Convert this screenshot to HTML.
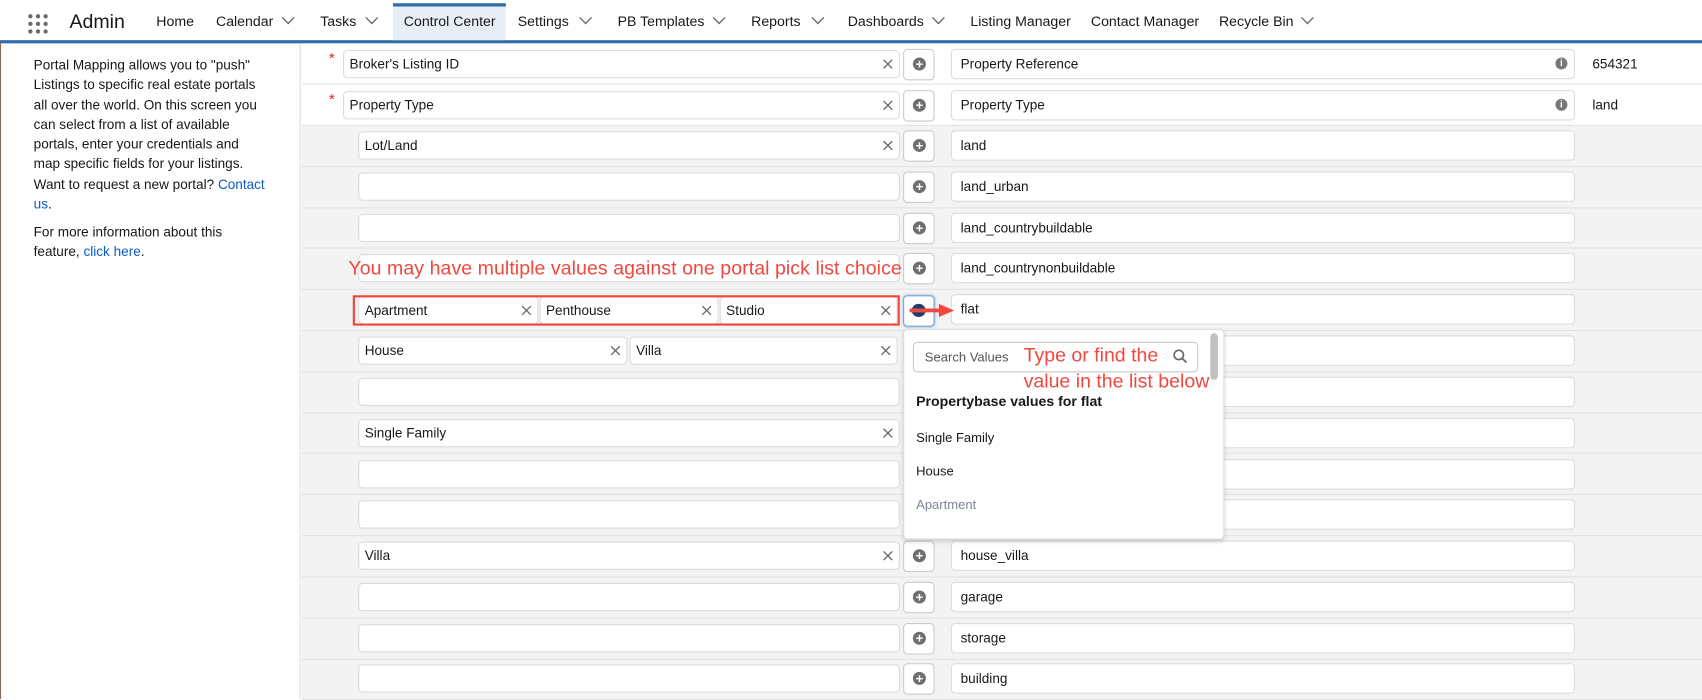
<!DOCTYPE html>
<html><head><meta charset="utf-8"><style>
html,body{margin:0;padding:0;width:1702px;height:699px;overflow:hidden;background:#fff}
#w{position:absolute;left:0;top:0;width:1568px;height:644px;transform:scale(1.08546);transform-origin:0 0;font-family:"Liberation Sans",sans-serif;color:#181818;font-size:12.5px}
.a{position:absolute}
.nav{left:0;top:0;width:1568px;height:37px;background:#fff;border-bottom:3px solid #2f6ca8}
.t{position:absolute;top:12px;font-size:13px;color:#181818}
.ch{position:absolute;top:13px;width:6px;height:6px;border-right:1.1px solid #666;border-bottom:1.1px solid #666;transform:rotate(45deg) scale(1.2,1.2);}
.side{left:0;top:40px;width:277px;height:604px;background:#fff;border-right:1px solid #ddd;border-left:1px solid #8a6a55;box-sizing:border-box}
.side p{margin:0;position:absolute;left:30px;width:240px;line-height:18.3px;font-size:12.5px;white-space:nowrap}
.side a{color:#0b5cc4;text-decoration:none}
.main{left:278px;top:40px;width:1290px;height:604px;background:#f3f3f3}
.row{position:absolute;left:278px;width:1290px;height:38px;border-bottom:1px solid #e2e2e2;box-sizing:border-box}
.in{position:absolute;height:26px;background:#fff;border:1px solid #dcdcdc;border-radius:4px;box-sizing:border-box;line-height:24px;padding-left:5px;font-size:12.5px}
.x{position:absolute;right:5px;top:7px;width:10px;height:10px}
.pb{position:absolute;left:832px;width:29px;height:29px;background:#fff;border:1px solid #c9c9c9;border-radius:4px;box-sizing:border-box}
.pb:after{content:"+";position:absolute;left:8px;top:7px;width:12px;height:12px;border-radius:50%;background:#6f6f6f;color:#fff;font-size:12px;line-height:12px;text-align:center;font-weight:bold}
.info{position:absolute;right:6px;top:7px;width:11px;height:11px;border-radius:50%;background:#777;color:#fff;font-size:9px;line-height:11px;text-align:center;font-weight:bold}
.red{color:#f0483e;font-size:18px}
</style></head><body><div id="w">
<svg width="0" height="0" style="position:absolute"><defs><symbol id="X" viewBox="0 0 10 10"><path d="M1 1L9 9M9 1L1 9" stroke="#666" stroke-width="1.2"/></symbol></defs></svg>
<div class="a nav"></div>
<div class="a" style="left:25px;top:12px;width:20px;height:20px">
<svg width="20" height="20"><g fill="#6b6b6b"><circle cx="3" cy="3" r="2"/><circle cx="10" cy="3" r="2"/><circle cx="17" cy="3" r="2"/><circle cx="3" cy="10" r="2"/><circle cx="10" cy="10" r="2"/><circle cx="17" cy="10" r="2"/><circle cx="3" cy="17" r="2"/><circle cx="10" cy="17" r="2"/><circle cx="17" cy="17" r="2"/></g></svg></div>
<div class="t" style="left:64px;top:10px;font-size:18px">Admin</div>
<div class="a" style="left:362px;top:3px;width:104px;height:34px;background:#e8eef5;border-top:3px solid #2f6ca8;box-sizing:border-box"></div>
<div class="t" style="left:144px">Home</div>
<div class="t" style="left:199px">Calendar</div><div class="ch" style="left:262px"></div>
<div class="t" style="left:295px">Tasks</div><div class="ch" style="left:339px"></div>
<div class="t" style="left:372px">Control Center</div>
<div class="t" style="left:477px">Settings</div><div class="ch" style="left:536px"></div>
<div class="t" style="left:569px">PB Templates</div><div class="ch" style="left:659px"></div>
<div class="t" style="left:692px">Reports</div><div class="ch" style="left:750px"></div>
<div class="t" style="left:781px">Dashboards</div><div class="ch" style="left:861px"></div>
<div class="t" style="left:894px">Listing Manager</div>
<div class="t" style="left:1005px">Contact Manager</div>
<div class="t" style="left:1123px">Recycle Bin</div><div class="ch" style="left:1201px"></div>

<div class="a side">
<p style="top:11px">Portal Mapping allows you to "push"<br>Listings to specific real estate portals<br>all over the world. On this screen you<br>can select from a list of available<br>portals, enter your credentials and<br>map specific fields for your listings.<br>Want to request a new portal? <a>Contact</a><br><a>us</a>.</p>
<p style="top:165px">For more information about this<br>feature, <a>click here</a>.</p>
</div>
<div class="a main"></div>

<div class="row" style="top:40px;background:#fff"></div>
<div class="row" style="top:78px;background:#fff"></div>
<div class="row" style="top:116px"></div><div class="row" style="top:154px"></div><div class="row" style="top:191px"></div><div class="row" style="top:229px"></div><div class="row" style="top:267px"></div><div class="row" style="top:305px"></div><div class="row" style="top:343px"></div><div class="row" style="top:380px"></div><div class="row" style="top:418px"></div><div class="row" style="top:456px"></div><div class="row" style="top:494px"></div><div class="row" style="top:532px"></div><div class="row" style="top:570px"></div><div class="row" style="top:607px"></div>

<div class="a" style="left:303px;top:45px;color:#e3262b;font-size:14px">*</div>
<div class="a" style="left:303px;top:83px;color:#e3262b;font-size:14px">*</div>
<div class="in" style="left:316px;top:46px;width:513px">Broker's Listing ID<svg class="x"><use href="#X"/></svg></div>
<div class="in" style="left:316px;top:84px;width:513px">Property Type<svg class="x"><use href="#X"/></svg></div>
<div class="in" style="left:330px;top:121px;width:499px">Lot/Land<svg class="x"><use href="#X"/></svg></div>
<div class="in" style="left:330px;top:159px;width:499px"></div>
<div class="in" style="left:330px;top:197px;width:499px"></div>
<div class="in" style="left:330px;top:234px;width:499px"></div>
<div class="in" style="left:330px;top:273px;width:166px">Apartment<svg class="x"><use href="#X"/></svg></div>
<div class="in" style="left:497px;top:273px;width:165px">Penthouse<svg class="x"><use href="#X"/></svg></div>
<div class="in" style="left:663px;top:273px;width:164px">Studio<svg class="x"><use href="#X"/></svg></div>
<div class="a" style="left:325px;top:272px;width:500px;height:24px;border:2px solid #f0483e"></div>
<div class="in" style="left:330px;top:310px;width:248px">House<svg class="x"><use href="#X"/></svg></div>
<div class="in" style="left:580px;top:310px;width:247px">Villa<svg class="x"><use href="#X"/></svg></div>
<div class="in" style="left:330px;top:348px;width:499px"></div>
<div class="in" style="left:330px;top:386px;width:499px">Single Family<svg class="x"><use href="#X"/></svg></div>
<div class="in" style="left:330px;top:424px;width:499px"></div>
<div class="in" style="left:330px;top:461px;width:499px"></div>
<div class="in" style="left:330px;top:499px;width:499px">Villa<svg class="x"><use href="#X"/></svg></div>
<div class="in" style="left:330px;top:537px;width:499px"></div>
<div class="in" style="left:330px;top:575px;width:499px"></div>
<div class="in" style="left:330px;top:612px;width:499px"></div>

<div class="pb" style="top:45px"></div><div class="pb" style="top:83px"></div><div class="pb" style="top:120px"></div><div class="pb" style="top:158px"></div><div class="pb" style="top:196px"></div><div class="pb" style="top:233px"></div><div class="pb" style="top:272px;border-color:#7aa7da;box-shadow:0 0 2px #7aa7da"></div><div class="pb" style="top:498px"></div><div class="pb" style="top:536px"></div><div class="pb" style="top:574px"></div><div class="pb" style="top:611px"></div>

<div class="in" style="left:876px;top:45px;width:575px;height:28px;line-height:26px;padding-left:8px">Property Reference<span class="info">i</span></div>
<div class="in" style="left:876px;top:83px;width:575px;height:28px;line-height:26px;padding-left:8px">Property Type<span class="info">i</span></div>
<div class="a" style="left:1467px;top:52px">654321</div>
<div class="a" style="left:1467px;top:90px">land</div>
<div class="in" style="left:876px;top:120px;width:575px;height:28px;line-height:26px;padding-left:8px">land</div>
<div class="in" style="left:876px;top:158px;width:575px;height:28px;line-height:26px;padding-left:8px">land_urban</div>
<div class="in" style="left:876px;top:196px;width:575px;height:28px;line-height:26px;padding-left:8px">land_countrybuildable</div>
<div class="in" style="left:876px;top:233px;width:575px;height:28px;line-height:26px;padding-left:8px">land_countrynonbuildable</div>
<div class="in" style="left:876px;top:271px;width:575px;height:28px;line-height:26px;padding-left:8px">flat</div>
<div class="in" style="left:876px;top:309px;width:575px;height:28px"></div>
<div class="in" style="left:876px;top:347px;width:575px;height:28px"></div>
<div class="in" style="left:876px;top:385px;width:575px;height:28px"></div>
<div class="in" style="left:876px;top:423px;width:575px;height:28px"></div>
<div class="in" style="left:876px;top:460px;width:575px;height:28px"></div>
<div class="in" style="left:876px;top:498px;width:575px;height:28px;line-height:26px;padding-left:8px">house_villa</div>
<div class="in" style="left:876px;top:536px;width:575px;height:28px;line-height:26px;padding-left:8px">garage</div>
<div class="in" style="left:876px;top:574px;width:575px;height:28px;line-height:26px;padding-left:8px">storage</div>
<div class="in" style="left:876px;top:611px;width:575px;height:28px;line-height:26px;padding-left:8px">building</div>

<div class="a red" style="left:321px;top:237px;letter-spacing:0.05px;white-space:nowrap">You may have multiple values against one portal pick list choice</div>
<svg class="a" style="left:835px;top:278px" width="46" height="16"><circle cx="11" cy="8" r="6" fill="#1d3f6e"/><path d="M3 8 H32" stroke="#f0483e" stroke-width="3.5"/><path d="M30 2 L44 8 L30 14 Z" fill="#f0483e"/></svg>

<div class="a" style="left:832px;top:303px;width:294px;height:192px;background:#fff;border:1px solid #ddd;border-radius:4px;box-shadow:0 2px 4px rgba(0,0,0,.15)"></div>
<div class="a" style="left:841px;top:315px;width:263px;height:28px;border:1px solid #c9c9c9;border-radius:4px;box-sizing:border-box"></div>
<div class="a" style="left:852px;top:322px;color:#555;font-size:12px">Search Values</div>
<svg class="a" style="left:1080px;top:321px" width="14" height="14"><circle cx="6" cy="6" r="4.3" fill="none" stroke="#666" stroke-width="1.5"/><path d="M9 9 L13 13" stroke="#666" stroke-width="1.6"/></svg>
<div class="a" style="left:1115px;top:307px;width:7px;height:43px;background:#c1c1c1;border-radius:4px"></div>
<div class="a red" style="left:943px;top:317px;white-space:nowrap">Type or find the</div>
<div class="a red" style="left:943px;top:341px;white-space:nowrap">value in the list below</div>
<div class="a" style="left:844px;top:362px;font-weight:bold;font-size:13px">Propertybase values for flat</div>
<div class="a" style="left:844px;top:396px;font-size:12px">Single Family</div>
<div class="a" style="left:844px;top:427px;font-size:12px">House</div>
<div class="a" style="left:844px;top:458px;font-size:12px;color:#7d8594">Apartment</div>
</div></body></html>
